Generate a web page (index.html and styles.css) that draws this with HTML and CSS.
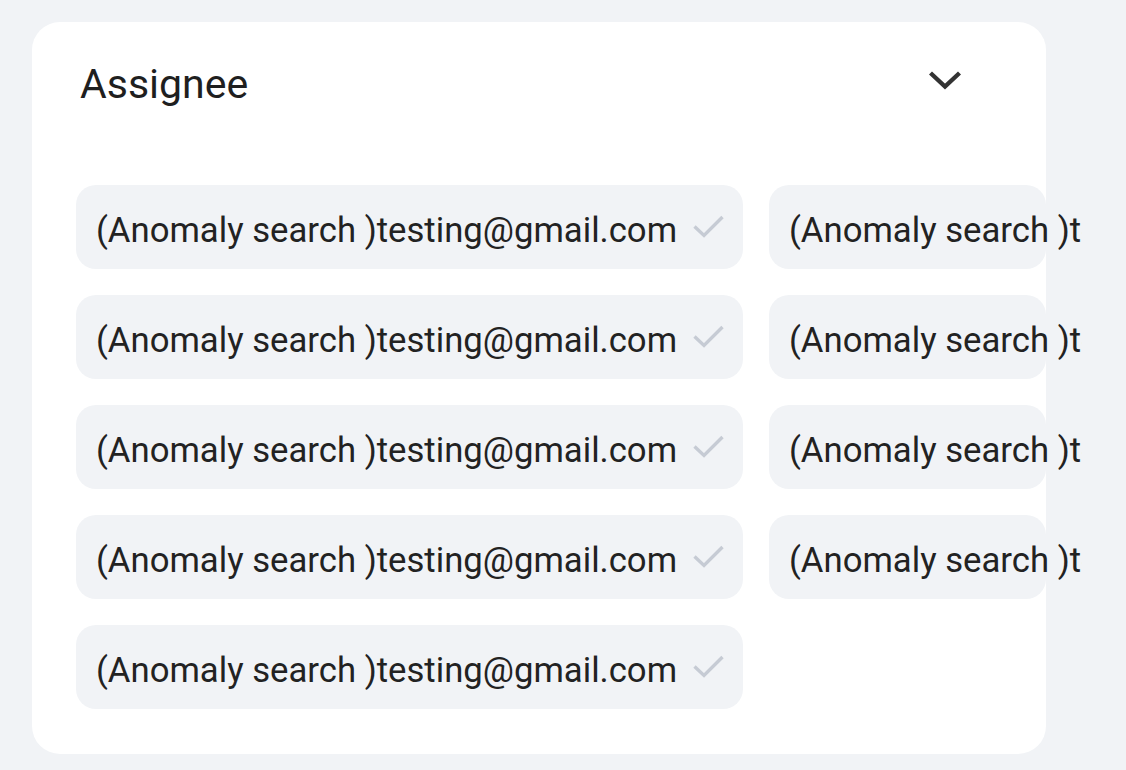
FILE: index.html
```html
<!DOCTYPE html>
<html>
<head>
<meta charset="utf-8">
<link rel="stylesheet" href="styles.css">
</head>
<body>
<div class="card">
  <div class="header">
    <div class="title">Assignee</div>
    <svg class="chevron" width="34" height="20" viewBox="0 0 34 20"><path d="M2.5 3 L17 16.5 L31.5 3" fill="none" stroke="#333" stroke-width="4.4"/></svg>
  </div>
  <div class="grid">
    <div class="chip"><span class="label">(Anomaly search )testing@gmail.com</span><svg class="check" width="31" height="23" viewBox="0 0 31 23"><path d="M1.5 11.5 L11 20.5 L29.5 2" fill="none" stroke="#c6cbd4" stroke-width="3.4"/></svg></div>
    <div class="chip chip-cut"><span class="label">(Anomaly search )testing@gmail.com</span></div>
    <div class="chip"><span class="label">(Anomaly search )testing@gmail.com</span><svg class="check" width="31" height="23" viewBox="0 0 31 23"><path d="M1.5 11.5 L11 20.5 L29.5 2" fill="none" stroke="#c6cbd4" stroke-width="3.4"/></svg></div>
    <div class="chip chip-cut"><span class="label">(Anomaly search )testing@gmail.com</span></div>
    <div class="chip"><span class="label">(Anomaly search )testing@gmail.com</span><svg class="check" width="31" height="23" viewBox="0 0 31 23"><path d="M1.5 11.5 L11 20.5 L29.5 2" fill="none" stroke="#c6cbd4" stroke-width="3.4"/></svg></div>
    <div class="chip chip-cut"><span class="label">(Anomaly search )testing@gmail.com</span></div>
    <div class="chip"><span class="label">(Anomaly search )testing@gmail.com</span><svg class="check" width="31" height="23" viewBox="0 0 31 23"><path d="M1.5 11.5 L11 20.5 L29.5 2" fill="none" stroke="#c6cbd4" stroke-width="3.4"/></svg></div>
    <div class="chip chip-cut"><span class="label">(Anomaly search )testing@gmail.com</span></div>
    <div class="chip"><span class="label">(Anomaly search )testing@gmail.com</span><svg class="check" width="31" height="23" viewBox="0 0 31 23"><path d="M1.5 11.5 L11 20.5 L29.5 2" fill="none" stroke="#c6cbd4" stroke-width="3.4"/></svg></div>
  </div>
</div>
</body>
</html>
```
FILE: styles.css
```css
html, body {
  margin: 0;
  padding: 0;
  background: #f1f3f6;
  font-family: Roboto, "Liberation Sans", sans-serif;
  color: #1f1f1f;
  overflow: hidden;
}
.card {
  box-sizing: border-box;
  margin: 22px 0 0 32px;
  width: 1014px;
  height: 732px;
  background: #ffffff;
  border-radius: 28px;
  padding: 38px 0 0 44px;
}
.header {
  display: flex;
  align-items: center;
  justify-content: space-between;
  padding: 0 84px 0 4px;
  height: 48px;
}
.title {
  font-size: 41px;
  line-height: 48px;
}
.chevron {
  display: block;
  margin-top: -8px;
}
.grid {
  margin-top: 77px;
  width: 1006px;
  display: grid;
  grid-template-columns: 667px 277px;
  column-gap: 26px;
  row-gap: 26px;
  overflow: hidden;
}
.chip {
  box-sizing: border-box;
  height: 84px;
  display: flex;
  align-items: center;
  background: #f1f3f6;
  border-radius: 20px;
  padding: 0 19px 0 20px;
  white-space: nowrap;
}
.label {
  font-size: 34.7px;
  line-height: 40px;
  padding-top: 6px;
  flex: none;
  color: #222;
}
.check {
  display: block;
  margin-left: auto;
  margin-top: -2px;
  flex: none;
}
```
